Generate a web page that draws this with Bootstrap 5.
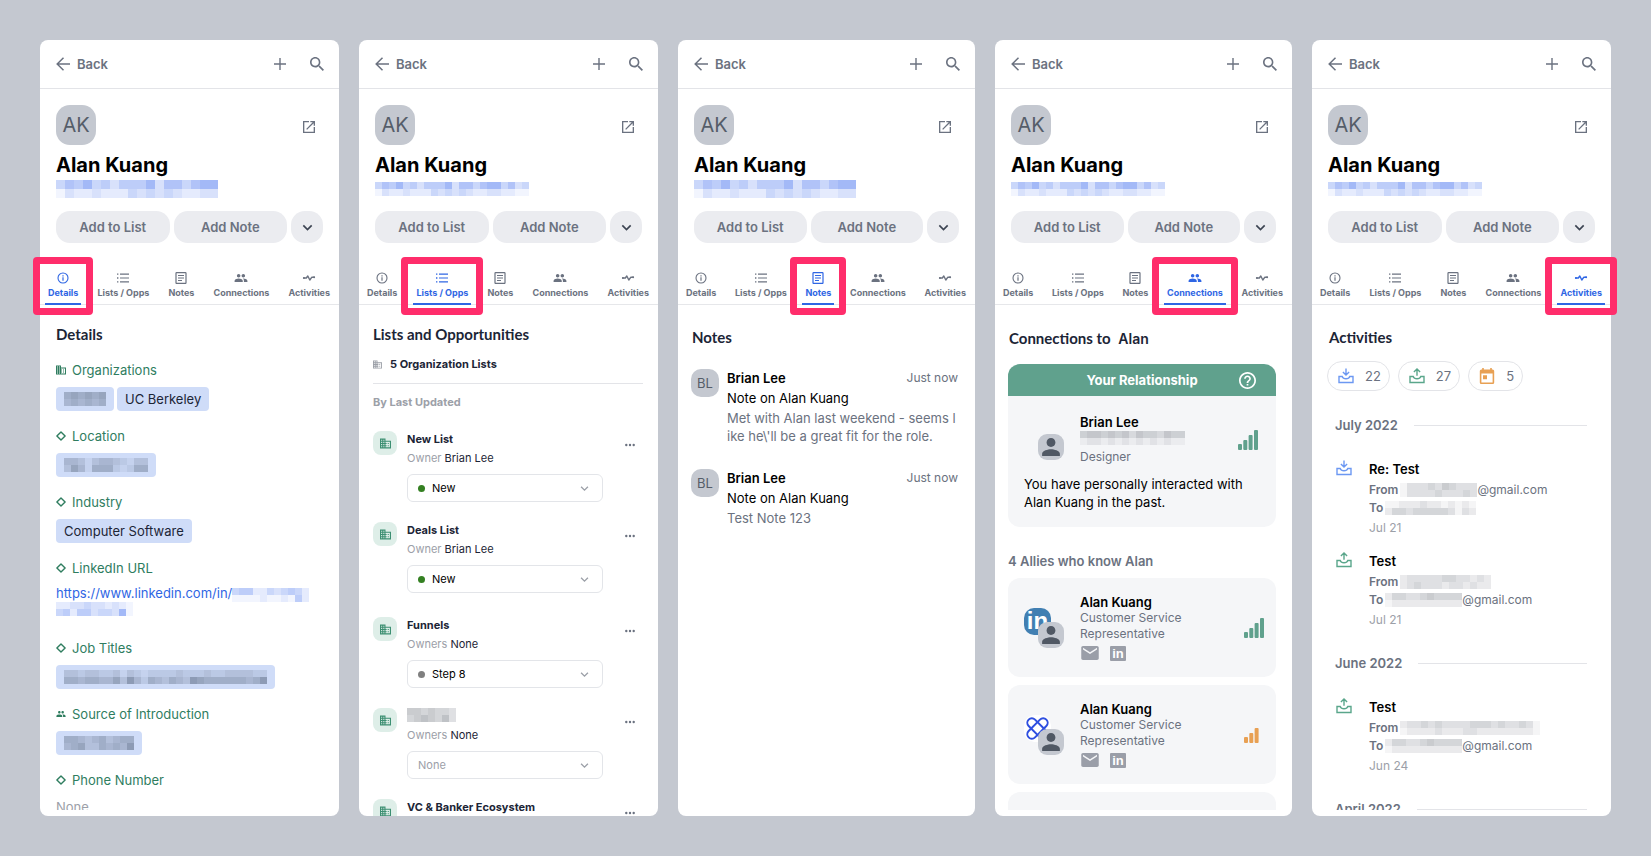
<!DOCTYPE html>
<html lang="en">
<head>
<meta charset="utf-8">
<meta name="viewport" content="width=device-width, initial-scale=1">
<title>Contact profile panels</title>
<link href="https://cdn.jsdelivr.net/npm/bootstrap@5.3.0/dist/css/bootstrap.min.css" rel="stylesheet">
<style>
  :root { --ink:#1c2536; --grey:#6b7280; --soft:#9ca0a8; --line:#e3e4e8; --green:#2f7d5f; --blue:#2f66e4; --pink:#ff2d6b; }
  body { background:#c4c8d0; font-family:Inter,"Liberation Sans",sans-serif; font-size:13px; line-height:18px; color:#000; }
  svg { display:block; flex:none; fill:currentColor; }
  .board { display:grid; grid-template-columns:299fr 299fr 297fr 297fr 299fr; gap:20px; padding:40px; height:100vh; }
  .panel { background:#fff; border-radius:8px; min-width:0; }
  .clip { flex:1 1 0; min-height:0; overflow:hidden; margin-bottom:6px; }
  .clip-full { margin-bottom:0; border-radius:0 0 8px 8px; }
  .plain { background:none; border:0; padding:0; color:inherit; }
  .grey { color:var(--grey); } .soft { color:var(--soft); } .ink { color:var(--ink); }

  /* shared profile block */
  .topbar { height:49px; border-bottom:1px solid var(--line); color:var(--grey); padding:0 15px 0 16px; }
  .back-btn { gap:7px; }
  .initials { background:#c4c8d0; color:#555d69; display:flex; align-items:center; justify-content:center; flex:none; }
  .initials-lg { width:40px; height:40px; border-radius:14px; font-size:20px; }
  .initials-sm { width:28px; height:28px; border-radius:10px; font-size:13px; }
  .person-name { font-size:20px; line-height:24px; font-weight:700; margin:8px 0 3px; }
  .contact { height:18px; margin-bottom:13px; display:flex; align-items:center; }
  .act { background:#ebecf0; border:0; border-radius:14px; height:32px; padding:0; color:var(--grey); font-weight:600; flex:1 1 0; }
  .act-more { flex:0 0 32px; color:#3c4452; }
  .tabs { margin-top:28px; padding:0 6px 0 5px; box-shadow:inset 0 -1px #e6e7ea; }
  .tab { position:relative; background:none; border:0; border-bottom:2px solid transparent; padding:0 3px 3px; font-size:9px; line-height:14px; font-weight:700; color:var(--grey); white-space:nowrap; }
  .tab svg { margin:0 auto 1px; }
  .tab.active { color:var(--blue); border-color:var(--blue); }
  .tab.active::after { content:""; position:absolute; z-index:2; inset:-14px -12px -12px; border:7px solid var(--pink); border-radius:4px; }
  .heading { font-family:Lato,Inter,sans-serif; font-weight:700; font-size:15px; line-height:20px; color:var(--ink); margin:19px 0 0; }

  /* details */
  .details .heading { margin-bottom:16px; }
  .field { margin-bottom:15px; }
  .field-label { color:var(--green); line-height:20px; gap:6px; margin-bottom:7px; }
  .chips { gap:3px; }
  .chip { background:#cfdcf8; border-radius:4px; height:24px; padding:0 8px; color:var(--ink); display:flex; align-items:center; }
  .url { display:block; color:var(--blue); line-height:17px; text-decoration:none; }
  .url > .mosaic { display:block; height:17px; }
  .url-field { margin-bottom:19px; }
  .none-value { line-height:20px; }

  /* lists */
  .lists { font-size:11px; line-height:16px; padding:0 15px 0 14px; }
  .count-row { gap:8px; padding:12px 0 11px; border-bottom:1px solid var(--line); }
  .by-row { margin:10px 0 21px; }
  .list-item { gap:10px; margin-bottom:20px; }
  .list-item.spaced { margin-bottom:24px; }
  .list-name { min-height:16px; }
  .owner { margin-top:3px; }
  .more-btn { height:28px; align-self:flex-start; }
  .tile { width:24px; height:24px; border-radius:8px; background:#deeee8; color:#3d8f72; display:flex; align-items:center; justify-content:center; flex:none; }
  .picker { border:1px solid #e3e5e9; border-radius:6px; height:28px; padding:0 13px 0 10px; gap:7px; margin-top:8px; max-width:196px; }
  .picker select { appearance:none; border:0; background:none; flex:1; padding:0; font-size:11px; color:inherit; min-width:0; outline:0; }
  .dot { width:7px; height:7px; border-radius:50%; flex:none; }

  /* notes */
  .notes { padding:0 17px 0 13px; }
  .notes .heading { margin:22px 0 0 1px; }
  .note-item { margin-top:22px; }
  .note-item + .note-item { margin-top:24px; }
  .note-title { margin:2px 0; }
  .ago { font-size:12px; }

  /* connections */
  .conns { padding:0 16px 0 13px; }
  .conns .heading { margin:23px 0 15px 1px; }
  .alan { font-family:Inter,sans-serif; font-weight:600; font-size:14px; }
  .rel { background:#f5f6f8; border-radius:12px; overflow:hidden; }
  .rel-head { background:#60a18d; color:#fff; height:32px; font-weight:700; display:grid; grid-template-columns:1fr auto 1fr; align-items:center; }
  .rel-main { padding:18px 16px 16px; }
  .help-btn { margin-right:20px; }
  .rel-text { margin-top:10px; }
  .bars-own { color:#60a18d; margin-right:2px; }
  .allies { margin:25px 0 8px; }
  .ally { padding:16px 12px 16px 16px; margin-bottom:8px; }
  .pair { position:relative; width:40px; height:40px; flex:none; }
  .face { position:absolute; right:0; bottom:0; width:26px; height:26px; border-radius:9px; background:#c4c8d0; color:#505864; display:flex; align-items:center; justify-content:center; }
  .source { width:27px; height:27px; border-radius:10px; overflow:hidden; }
  .in-logo { background:#417fb2; color:#fff; font:700 24px/26px "Liberation Sans",sans-serif; text-align:center; }
  .in-small { width:16px; height:15px; background:#9a9ea8; font:700 13px/15px "Liberation Sans",sans-serif; text-align:center; text-decoration:none; border-radius:1px; }
  .who { line-height:17px; }
  .who .mosaic { height:17px; }
  .ally .who { line-height:16px; }
  .small-role { font-size:12px; }
  .who-links { gap:11px; padding:4px 0 0 1px; }
  .who-links a { color:#9a9ea8; } .who-links a.in-small { color:#fff; }

  /* activities */
  .acts { padding:0 24px 0 15px; }
  .acts .heading { margin:22px 0 0 2px; }
  .pills { margin:14px 0 24px; }
  .pill-count { border:1px solid var(--line); border-radius:15px; height:30px; padding:0 8px 0 10px; gap:11px; background:#fff; color:var(--grey); }
  .month { line-height:20px; font-weight:600; color:var(--grey); gap:16px; margin-left:8px; }
  .month::after { content:""; flex:1; height:1px; background:var(--line); }
  .month-next { margin-top:24px; }
  .mail { margin:25px 0 0 8px; gap:17px; color:var(--grey); padding-left:1px; font-size:12px; }
  .mail + .mail { margin-top:15px; }
  .subject { font-size:13px; font-weight:600; color:#000; }
  .mail b { font-weight:600; margin-right:2px; }
  .from { margin-top:3px; }
  .when { margin-top:2px; }
</style>
</head>
<body>
<svg width="0" height="0" class="position-absolute" aria-hidden="true">
  <symbol id="back" viewBox="0 0 14 14"><path d="M7.500 .8 1.200 7l6.300 6.200M1.200 7H14" fill="none" stroke="currentColor" stroke-width="1.500"/></symbol>
  <symbol id="plus" viewBox="0 0 12 12"><path d="M6 0v12M0 6h12" fill="none" stroke="currentColor" stroke-width="1.400"/></symbol>
  <symbol id="search" viewBox="3 3 17.500 17.500"><path d="M15.500 14h-.79l-.28-.27C15.410 12.590 16 11.110 16 9.500 16 5.910 13.090 3 9.500 3S3 5.910 3 9.500 5.910 16 9.500 16c1.610 0 3.090-.59 4.230-1.570l.27.28v.79l5 4.990L20.490 19l-4.990-5zm-6 0C7.010 14 5 11.990 5 9.500S7.010 5 9.500 5 14 7.010 14 9.500 11.990 14 9.500 14z"/></symbol>
  <symbol id="open" viewBox="3 3 18 18"><path d="M19 19H5V5h7V3H3v18h18v-9h-2v7zM14 3v2h3.590l-9.830 9.830 1.410 1.410L19 6.410V10h2V3h-7z"/></symbol>
  <symbol id="chev" viewBox="0 0 10 10"><path d="M1.200 3 5 6.800 8.800 3" fill="none" stroke="currentColor" stroke-width="1.500"/></symbol>
  <symbol id="info" viewBox="0 0 14 14"><circle cx="7" cy="7" r="5" fill="none" stroke="currentColor" stroke-width="1.100"/><path d="M6.400 6.300h1.200v3.400H6.400zM6.400 4.200h1.200v1.200H6.400z"/></symbol>
  <symbol id="list" viewBox="0 0 14 14"><path d="M1 2.400h1.400v1.400H1zM1 6.300h1.400v1.400H1zM1 10.200h1.400v1.400H1zM4 2.500h9v1.200H4zM4 6.400h9v1.200H4zM4 10.300h9v1.200H4z"/></symbol>
  <symbol id="note" viewBox="0 0 14 14"><path d="M2.600 1.600h8.800a.6.6 0 0 1 .6.6v9.600a.6.6 0 0 1-.6.6H2.600a.6.6 0 0 1-.6-.6V2.200a.6.6 0 0 1 .6-.6zM4 4.500h6M4 7h6M4 9.500h4" fill="none" stroke="currentColor" stroke-width="1.200"/></symbol>
  <symbol id="group" viewBox="0 0 24 24"><path d="M16 11c1.660 0 2.990-1.340 2.990-3S17.660 5 16 5c-1.660 0-3 1.340-3 3s1.340 3 3 3zm-8 0c1.660 0 2.990-1.340 2.990-3S9.660 5 8 5C6.340 5 5 6.340 5 8s1.340 3 3 3zm0 2c-2.330 0-7 1.170-7 3.500V19h14v-2.500c0-2.330-4.670-3.500-7-3.500zm8 0c-.29 0-.62.02-.97.05 1.160.84 1.970 1.970 1.970 3.450V19h6v-2.500c0-2.330-4.670-3.500-7-3.500z"/></symbol>
  <symbol id="pulse" viewBox="0 0 14 14"><path d="M1.500 7h2.800l1.500-2 2 4L9.700 6.300h2.800" fill="none" stroke="currentColor" stroke-width="1.400" stroke-linejoin="round"/><circle cx="1.900" cy="7" r="1"/><circle cx="12.100" cy="6.300" r="1"/></symbol>
  <symbol id="org" viewBox="2 2 20 20"><path d="M12 7V3H2v18h20V7H12zM6 19H4v-2h2v2zm0-4H4v-2h2v2zm0-4H4V9h2v2zm0-4H4V5h2v2zm4 12H8v-2h2v2zm0-4H8v-2h2v2zm0-4H8V9h2v2zm0-4H8V5h2v2zm10 12h-8v-2h2v-2h-2v-2h2v-2h-2V9h8v10zm-2-8h-2v2h2v-2zm0 4h-2v2h2v-2z"/></symbol>
  <symbol id="diamond" viewBox="0 0 10 10"><path d="M5 .9 9.100 5 5 9.100 .9 5z" fill="none" stroke="currentColor" stroke-width="1.400" stroke-linejoin="round"/></symbol>
  <symbol id="dots" viewBox="0 0 10 4"><circle cx="1.300" cy="2" r="1.200"/><circle cx="5" cy="2" r="1.200"/><circle cx="8.700" cy="2" r="1.200"/></symbol>
  <symbol id="help" viewBox="2 2 20 20"><path d="M11 18h2v-2h-2v2zm1-16C6.480 2 2 6.480 2 12s4.480 10 10 10 10-4.480 10-10S17.520 2 12 2zm0 18c-4.410 0-8-3.590-8-8s3.590-8 8-8 8 3.590 8 8-3.590 8-8 8zm0-14c-2.210 0-4 1.790-4 4h2c0-1.100.9-2 2-2s2 .9 2 2c0 2-3 1.750-3 5h2c0-2.250 3-2.500 3-5 0-2.210-1.790-4-4-4z"/></symbol>
  <symbol id="face" viewBox="3 3 18 18"><path d="M12 12c2.210 0 4-1.790 4-4s-1.790-4-4-4-4 1.790-4 4 1.790 4 4 4zm0 2c-2.670 0-8 1.340-8 4v2h16v-2c0-2.660-5.330-4-8-4z"/></symbol>
  <symbol id="env" viewBox="2 4 20 16"><path d="M20 4H4c-1.100 0-2 .9-2 2v12c0 1.100.9 2 2 2h16c1.100 0 2-.9 2-2V6c0-1.100-.9-2-2-2zm0 4-8 5-8-5V6l8 5 8-5v2z"/></symbol>
  <symbol id="clover" viewBox="0 0 27 27"><rect width="27" height="27" rx="10" fill="#fff"/><g fill="none" stroke="#2f4fe0" stroke-width="2"><rect x="1" y="9" width="25" height="9" rx="4.500" transform="rotate(45 13.500 13.500)"/><rect x="1" y="9" width="25" height="9" rx="4.500" transform="rotate(-45 13.500 13.500)"/></g></symbol>
  <symbol id="bars4" viewBox="0 0 20 20"><rect y="14" width="4" height="6" rx="1"/><rect x="5.300" y="10" width="4" height="10" rx="1"/><rect x="10.600" y="5" width="4" height="15" rx="1"/><rect x="16" width="4" height="20" rx="1"/></symbol>
  <symbol id="bars3" viewBox="0 0 20 20"><rect y="12" width="4" height="6" rx="1"/><rect x="5.300" y="8" width="4" height="10" rx="1"/><rect x="10.600" y="3" width="4" height="15" rx="1"/></symbol>
  <symbol id="inbox" viewBox="0 0 16 16"><path d="M1 8.500h3.200c.6 1.600 2 2.300 3.800 2.300s3.200-.7 3.800-2.300H15v6H1zM8 .5v6.300M4.900 4 8 7l3.100-3" fill="none" stroke="currentColor" stroke-width="1.400"/></symbol>
  <symbol id="outbox" viewBox="0 0 16 16"><path d="M1 8.500h3.200c.6 1.600 2 2.300 3.800 2.300s3.200-.7 3.800-2.300H15v6H1zM8 7.800V1.200M4.900 4 8 1l3.100 3" fill="none" stroke="currentColor" stroke-width="1.400"/></symbol>
  <symbol id="cal" viewBox="3 2 18 20"><path d="M19 4h-1V2h-2v2H8V2H6v2H5c-1.110 0-2 .9-2 2v14c0 1.100.89 2 2 2h14c1.100 0 2-.9 2-2V6c0-1.100-.9-2-2-2zm0 16H5V9h14v11zM7 11h5v5H7z"/></symbol>
</svg>

<!-- Header, profile and tab bar that every panel shares -->
<template id="profile">
  <header class="topbar d-flex align-items-center">
    <button type="button" class="plain back-btn d-flex align-items-center fw-semibold"><svg width="14" height="14"><use href="#back"/></svg>Back</button>
    <button type="button" class="plain ms-auto me-4" aria-label="Add"><svg width="12" height="12"><use href="#plus"/></svg></button>
    <button type="button" class="plain" aria-label="Search"><svg width="14" height="14"><use href="#search"/></svg></button>
  </header>
  <section class="px-3 pt-3">
    <div class="d-flex align-items-center justify-content-between">
      <div class="initials initials-lg">AK</div>
      <a href="#" class="grey me-2 pt-1" aria-label="Open in new tab"><svg width="12" height="12"><use href="#open"/></svg></a>
    </div>
    <h1 class="person-name">Alan Kuang</h1>
    <div class="contact"><div class="mosaic" data-color="#5b82f0" data-cells="4657453555736646774634|1322322243434322332211"></div></div>
    <div class="d-flex gap-1">
      <button type="button" class="act">Add to List</button>
      <button type="button" class="act">Add Note</button>
      <button type="button" class="act act-more d-flex align-items-center justify-content-center" aria-label="More actions"><svg width="11" height="11"><use href="#chev"/></svg></button>
    </div>
  </section>
  <nav class="tabs d-flex justify-content-between">
    <button type="button" class="tab"><svg width="14" height="14"><use href="#info"/></svg>Details</button>
    <button type="button" class="tab"><svg width="14" height="14"><use href="#list"/></svg>Lists / Opps</button>
    <button type="button" class="tab"><svg width="14" height="14"><use href="#note"/></svg>Notes</button>
    <button type="button" class="tab"><svg width="14" height="14"><use href="#group"/></svg>Connections</button>
    <button type="button" class="tab"><svg width="14" height="14"><use href="#pulse"/></svg>Activities</button>
  </nav>
</template>

<main class="board">
  <article class="panel d-flex flex-column" data-tab="0" data-cell="9">
    <div class="clip details px-3">
      <h2 class="heading">Details</h2>
      <div class="field">
        <div class="field-label d-flex align-items-center"><svg width="10" height="10"><use href="#org"/></svg>Organizations</div>
        <div class="chips d-flex"><span class="chip"><span class="mosaic" data-color="#5a6880" data-cells="565656|454545"></span></span><span class="chip">UC Berkeley</span></div>
      </div>
      <div class="field">
        <div class="field-label d-flex align-items-center"><svg width="10" height="10"><use href="#diamond"/></svg>Location</div>
        <div class="chips d-flex"><span class="chip"><span class="mosaic" data-color="#5a6880" data-cells="443134432133|364155521255"></span></span></div>
      </div>
      <div class="field">
        <div class="field-label d-flex align-items-center"><svg width="10" height="10"><use href="#diamond"/></svg>Industry</div>
        <div class="chips d-flex"><span class="chip">Computer Software</span></div>
      </div>
      <div class="field url-field">
        <div class="field-label d-flex align-items-center"><svg width="10" height="10"><use href="#diamond"/></svg>LinkedIn URL</div>
        <a href="#" class="url"><span class="d-flex align-items-end">https://www.linkedin.com/in/<span class="mosaic" data-color="#5b82f0" data-cells="45522434542|11112112152"></span></span><span class="mosaic" data-color="#5b82f0" data-cells="22334332321|45255344371"></span></a>
      </div>
      <div class="field">
        <div class="field-label d-flex align-items-center"><svg width="10" height="10"><use href="#diamond"/></svg>Job Titles</div>
        <div class="chips d-flex"><span class="chip"><span class="mosaic" data-color="#5a6880" data-cells="33233223132122223222322333322|55455446374254354376555555457"></span></span></div>
      </div>
      <div class="field">
        <div class="field-label d-flex align-items-center"><svg width="10" height="10"><use href="#group"/></svg>Source of Introduction</div>
        <div class="chips d-flex"><span class="chip"><span class="mosaic" data-color="#5a6880" data-cells="5543453455|4563354547"></span></span></div>
      </div>
      <div class="field">
        <div class="field-label d-flex align-items-center"><svg width="10" height="10"><use href="#diamond"/></svg>Phone Number</div>
        <div class="soft none-value">None</div>
      </div>
    </div>
  </article>

  <article class="panel d-flex flex-column" data-tab="1" data-cell="7">
    <div class="clip clip-full lists">
      <h2 class="heading">Lists and Opportunities</h2>
      <div class="ink fw-bold d-flex align-items-center count-row"><svg width="9" height="9" class="soft"><use href="#org"/></svg>5 Organization Lists</div>
      <div class="soft fw-bold by-row">By Last Updated</div>
      <div id="listItems"></div>
    </div>
  </article>

  <article class="panel d-flex flex-column" data-tab="2" data-cell="9">
    <div class="clip notes">
      <h2 class="heading">Notes</h2>
      <div class="d-flex gap-2 note-item">
        <div class="initials initials-sm">BL</div>
        <div class="flex-fill">
          <div class="d-flex justify-content-between"><span class="fw-semibold">Brian Lee</span><span class="grey ago">Just now</span></div>
          <div class="note-title">Note on Alan Kuang</div>
          <div class="grey text-nowrap">Met with Alan last weekend - seems l<br>ike he\'ll be a great fit for the role.</div>
        </div>
      </div>
      <div class="d-flex gap-2 note-item">
        <div class="initials initials-sm">BL</div>
        <div class="flex-fill">
          <div class="d-flex justify-content-between"><span class="fw-semibold">Brian Lee</span><span class="grey ago">Just now</span></div>
          <div class="note-title">Note on Alan Kuang</div>
          <div class="grey">Test Note 123</div>
        </div>
      </div>
    </div>
  </article>

  <article class="panel d-flex flex-column" data-tab="3" data-cell="7">
    <div class="clip conns">
      <h2 class="heading">Connections to <span class="ms-1 alan">Alan</span></h2>
      <div class="rel">
        <div class="rel-head"><span></span><span>Your Relationship</span><button type="button" class="plain ms-auto help-btn" aria-label="Help"><svg width="17" height="17"><use href="#help"/></svg></button></div>
        <div class="rel-main">
          <div class="d-flex align-items-center gap-3">
            <div class="pair"><span class="face"><svg width="20" height="20"><use href="#face"/></svg></span></div>
            <div class="who"><div class="fw-semibold">Brian Lee</div><div class="mosaic" data-color="#7a7f88" data-cells="455454535443544|122121212121211"></div><div class="grey small-role">Designer</div></div>
            <svg width="20" height="20" class="ms-auto bars-own"><use href="#bars4"/></svg>
          </div>
          <p class="mb-0 rel-text">You have personally interacted with Alan Kuang in the past.</p>
        </div>
      </div>
      <div class="grey fw-semibold allies">4 Allies who know Alan</div>
      <div class="rel ally d-flex align-items-center gap-3">
        <div class="pair"><div class="source in-logo">in</div><span class="face"><svg width="20" height="20"><use href="#face"/></svg></span></div>
        <div class="who"><div class="fw-semibold">Alan Kuang</div><div class="grey small-role">Customer Service<br>Representative</div>
          <div class="d-flex who-links"><a href="#" aria-label="Email"><svg width="18" height="14"><use href="#env"/></svg></a><a href="#" class="in-small">in</a></div></div>
        <svg width="20" height="20" class="ms-auto" color="#60a18d"><use href="#bars4"/></svg>
      </div>
      <div class="rel ally d-flex align-items-center gap-3">
        <div class="pair"><div class="source"><svg width="27" height="27"><use href="#clover"/></svg></div><span class="face"><svg width="20" height="20"><use href="#face"/></svg></span></div>
        <div class="who"><div class="fw-semibold">Alan Kuang</div><div class="grey small-role">Customer Service<br>Representative</div>
          <div class="d-flex who-links"><a href="#" aria-label="Email"><svg width="18" height="14"><use href="#env"/></svg></a><a href="#" class="in-small">in</a></div></div>
        <svg width="20" height="20" class="ms-auto" color="#e8a053"><use href="#bars3"/></svg>
      </div>
      <div class="rel ally d-flex align-items-center gap-3"><div class="pair"></div></div>
    </div>
  </article>

  <article class="panel d-flex flex-column" data-tab="4" data-cell="7">
    <div class="clip acts">
      <h2 class="heading">Activities</h2>
      <div class="d-flex gap-2 pills">
        <button type="button" class="pill-count d-flex align-items-center"><svg width="16" height="16" color="#6c98f2"><use href="#inbox"/></svg>22</button>
        <button type="button" class="pill-count d-flex align-items-center"><svg width="16" height="16" color="#5aa68b"><use href="#outbox"/></svg>27</button>
        <button type="button" class="pill-count d-flex align-items-center"><svg width="16" height="16" color="#e8a053"><use href="#cal"/></svg>5</button>
      </div>
      <div class="month d-flex align-items-center">July 2022</div>
      <div class="mail d-flex">
        <svg width="16" height="16" color="#6c98f2"><use href="#inbox"/></svg>
        <div><div class="subject">Re: Test</div>
          <div class="d-flex align-items-center from"><b>From</b><span class="mosaic" data-color="#7a7f88" data-cells="13334354333|13333433343"></span>@gmail.com</div>
          <div class="d-flex align-items-center"><b>To</b><span class="mosaic" data-color="#7a7f88" data-cells="1122232212121|2443444443132"></span></div>
          <div class="soft when">Jul 21</div></div>
      </div>
      <div class="mail d-flex">
        <svg width="16" height="16" color="#5aa68b"><use href="#outbox"/></svg>
        <div><div class="subject">Test</div>
          <div class="d-flex align-items-center from"><b>From</b><span class="mosaic" data-color="#7a7f88" data-cells="2333334433232|2343332332322"></span></div>
          <div class="d-flex align-items-center"><b>To</b><span class="mosaic" data-color="#7a7f88" data-cells="24433454444|12222222222"></span>@gmail.com</div>
          <div class="soft when">Jul 21</div></div>
      </div>
      <div class="month month-next d-flex align-items-center">June 2022</div>
      <div class="mail d-flex">
        <svg width="16" height="16" color="#5aa68b"><use href="#outbox"/></svg>
        <div><div class="subject">Test</div>
          <div class="d-flex align-items-center from"><b>From</b><span class="mosaic" data-color="#7a7f88" data-cells="23343433334443433431|12222322233222222221"></span></div>
          <div class="d-flex align-items-center"><b>To</b><span class="mosaic" data-color="#7a7f88" data-cells="24433454444|12222222222"></span>@gmail.com</div>
          <div class="soft when">Jun 24</div></div>
      </div>
      <div class="month month-next d-flex align-items-center">April 2022</div>
    </div>
  </article>
</main>

<script src="https://cdn.jsdelivr.net/npm/bootstrap@5.3.0/dist/js/bootstrap.bundle.min.js"></script>
<script>
  // Shared profile block for each panel, with that panel's tab active
  document.querySelectorAll('.panel').forEach(p => {
    p.prepend(document.getElementById('profile').content.cloneNode(true));
    p.querySelectorAll('.tab')[+p.dataset.tab].classList.add('active');
    const m = p.querySelector('.contact .mosaic'), cell = +p.dataset.cell;
    m.dataset.size = cell;
    m.dataset.cells = m.dataset.cells.split('|').map(r => r.slice(0, Math.floor(162 / cell))).join('|');
  });

  // Rows of the "By Last Updated" list
  const items = [
    ['New List', 'Owner', 'Brian Lee', 'New', '#348022'],
    ['Deals List', 'Owner', 'Brian Lee', 'New', '#348022'],
    ['Funnels', 'Owners', 'None', 'Step 8', '#808080'],
    ['', 'Owners', 'None', 'None', ''],
    ['VC &amp; Banker Ecosystem', 'Owners', 'None', 'None', '']
  ];
  document.getElementById('listItems').innerHTML = items.map(([name, role, owner, step, dot], i) => `
    <div class="list-item d-flex ${i === 1 ? 'spaced' : ''}">
      <span class="tile"><svg width="11" height="11"><use href="#org"/></svg></span>
      <div class="flex-fill">
        <div class="d-flex justify-content-between">
          <div><div class="ink fw-bold list-name">${name || '<span class="mosaic" data-color="#7a7f88" data-cells="5545443|4565463"></span>'}</div>
          <div class="owner"><span class="soft">${role}</span> <span class="ink">${owner}</span></div></div>
          <button type="button" class="plain grey more-btn me-2" aria-label="More"><svg width="10" height="4"><use href="#dots"/></svg></button>
        </div>
        <label class="picker d-flex align-items-center ${dot ? '' : 'soft'}">
          ${dot ? `<span class="dot" style="background:${dot}"></span>` : ''}
          <select aria-label="Status"><option>${step}</option></select>
          <svg width="9" height="9" class="soft"><use href="#chev"/></svg>
        </label>
      </div>
    </div>`).join('');

  // Pixelated placeholders: each digit is the strength of one cell
  document.querySelectorAll('.mosaic').forEach(m => {
    const rows = m.dataset.cells.split('|'), s = +(m.dataset.size || 7);
    m.innerHTML = `<svg width="${rows[0].length * s}" height="${rows.length * s}" style="color:${m.dataset.color}" shape-rendering="crispEdges" aria-hidden="true">` +
      rows.map((r, y) => [...r].map((c, x) => `<rect x="${x * s}" y="${y * s}" width="${s}" height="${s}" opacity="${c * .08}"/>`).join('')).join('') + '</svg>';
  });
</script>
</body>
</html>
